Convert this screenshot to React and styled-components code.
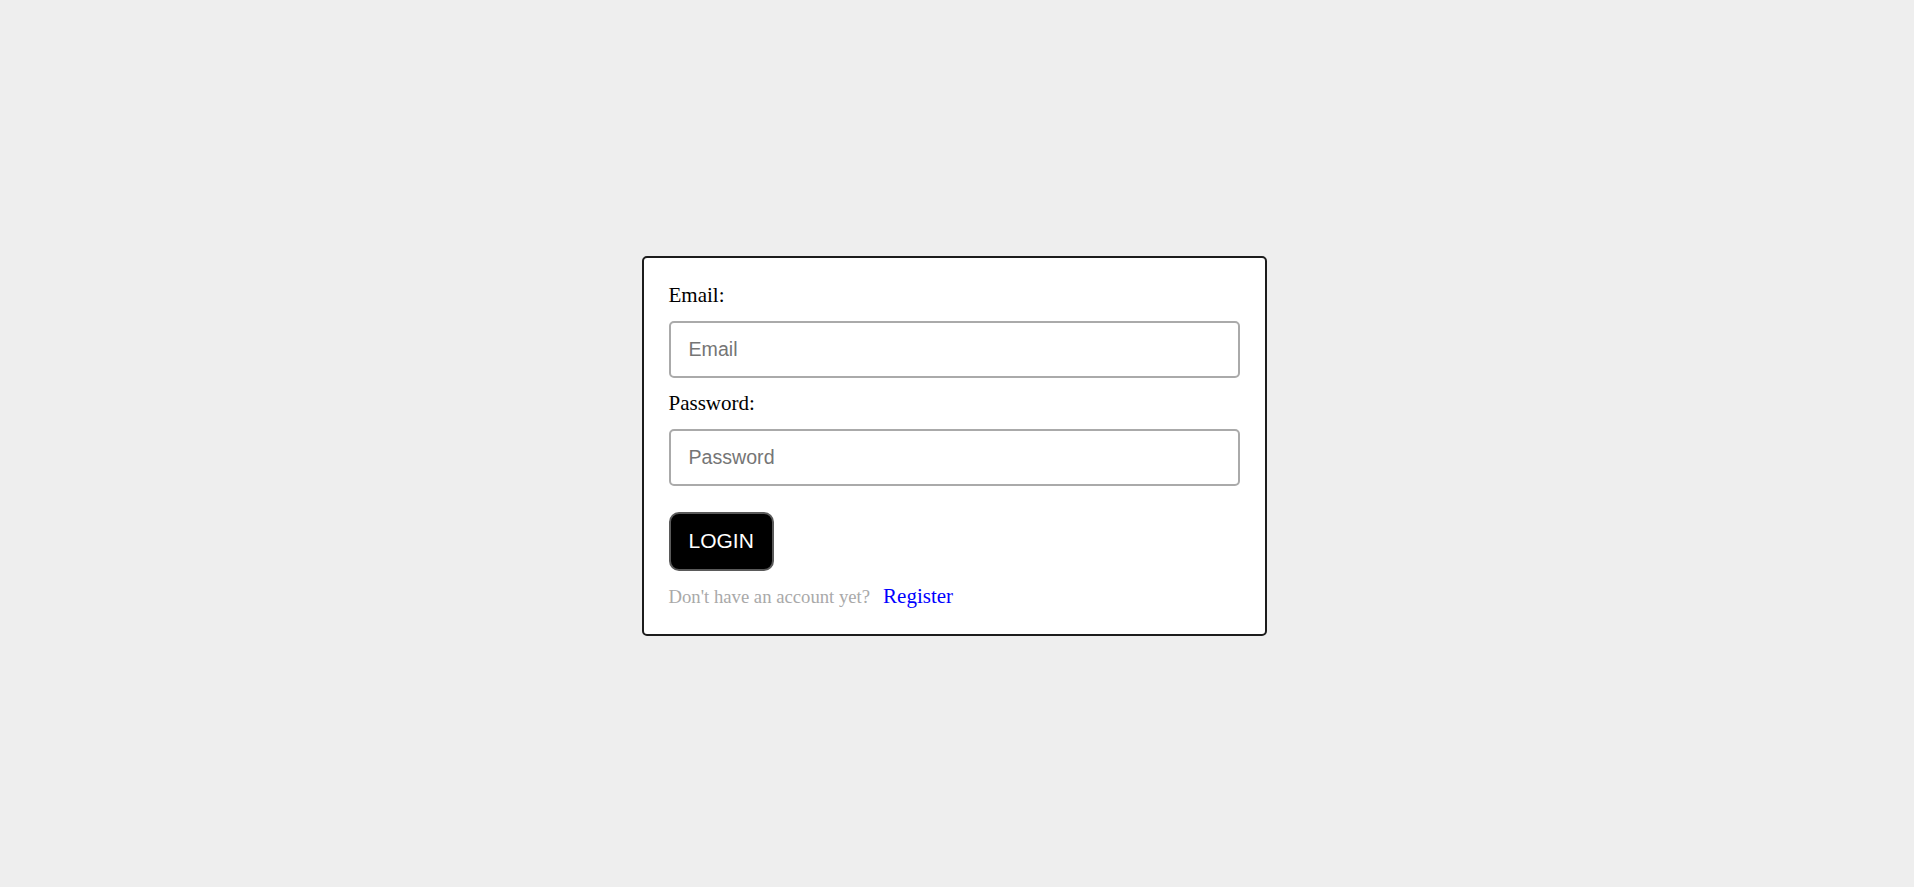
import styled, { createGlobalStyle } from "styled-components";

const GlobalStyle = createGlobalStyle`
  html, body {
    margin: 0;
    padding: 0;
    background-color: #eeeeee;
    font-family: "Liberation Serif", "Times New Roman", serif;
  }
`;

const Page = styled.main`
  display: flex;
  justify-content: center;
  align-items: center;
  width: 100vw;
  height: 100vh;
  padding: 5px 6px 0 0;
  box-sizing: border-box;
`;

const Card = styled.form`
  box-sizing: border-box;
  width: 625px;
  padding: 25px;
  display: flex;
  flex-direction: column;
  background-color: #fff;
  border: 2px solid #1c1c1c;
  border-radius: 5px;
`;

const Label = styled.label`
  display: block;
  font-size: 21px;
  line-height: 24px;
  color: #000;
  margin-bottom: 13.5px;
`;

const Input = styled.input`
  box-sizing: border-box;
  width: 100%;
  height: 57px;
  padding: 0 18px;
  margin-bottom: 13.5px;
  border: 2px solid #aaaaaa;
  border-radius: 5px;
  font-family: "Liberation Sans", Arial, sans-serif;
  font-size: 19.6px;
  color: #222;
  outline: none;

  &::placeholder {
    color: #757575;
  }
`;

const Button = styled.button`
  align-self: flex-start;
  box-sizing: border-box;
  height: 59px;
  margin-top: 12.5px;
  padding: 0 18px;
  background-color: #000;
  color: #fff;
  border: 2px solid #5a5a5a;
  border-radius: 10px;
  font-family: "Liberation Sans", Arial, sans-serif;
  font-size: 21px;
  cursor: pointer;
`;

const Footer = styled.p`
  display: flex;
  align-items: baseline;
  gap: 13px;
  margin: 13.5px 0 0;
  line-height: 24px;
`;

const Hint = styled.span`
  font-size: 18.7px;
  color: #a9a9a9;
`;

const RegisterLink = styled.a`
  font-size: 21px;
  color: #0000ff;
  text-decoration: none;
`;

const App = () => {
  return (
    <>
      <GlobalStyle />
      <Page>
        <Card onSubmit={(e) => e.preventDefault()}>
          <Label htmlFor="email">Email:</Label>
          <Input id="email" type="email" placeholder="Email" />
          <Label htmlFor="password">Password:</Label>
          <Input id="password" type="password" placeholder="Password" />
          <Button type="submit">LOGIN</Button>
          <Footer>
            <Hint>Don't have an account yet?</Hint>
            <RegisterLink href="#register">Register</RegisterLink>
          </Footer>
        </Card>
      </Page>
    </>
  );
};

export default App;
